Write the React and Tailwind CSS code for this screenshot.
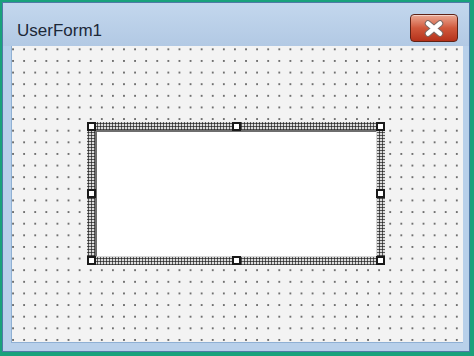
export default function App() {
  const handles = [
    "left-0 top-0",
    "left-[145px] top-0",
    "right-0 top-0",
    "left-0 top-[67px]",
    "right-0 top-[67px]",
    "left-0 bottom-0",
    "left-[145px] bottom-0",
    "right-0 bottom-0",
  ];

  return (
    <div className="w-[474px] h-[356px] bg-[#19a27b] pl-[2px] pt-[2px] pr-[4px] pb-[4px]">
      <div className="w-full h-full flex flex-col border border-[#4f7aa6] bg-[#b8d0ea] font-['Liberation_Sans',Arial,sans-serif]">
        {/* title bar */}
        <div className="h-[43px] shrink-0 flex justify-between items-start pl-[14px] pr-[11px] bg-gradient-to-b from-[#c3d7ed] to-[#b2c9e4]">
          <div className="pt-[18px] text-[17px] leading-[20px] text-[#1c2838]">UserForm1</div>
          <button className="mt-[11px] w-[48px] h-[28px] rounded-[4px] border border-[#5e2216] bg-gradient-to-b from-[#eaa893] via-[#d0583c] to-[#b5311a] flex items-center justify-center shadow-[inset_0_1px_0_rgba(255,255,255,0.5)]">
            <svg width="22" height="17" viewBox="0 0 22 17">
              <path d="M5 3.5 L17 13.5 M17 3.5 L5 13.5" stroke="#7a6a66" strokeWidth="6.5" strokeLinecap="round" />
              <path d="M5 3.5 L17 13.5 M17 3.5 L5 13.5" stroke="#ffffff" strokeWidth="4.5" strokeLinecap="round" />
            </svg>
          </button>
        </div>
        {/* body frame */}
        <div className="flex-1 flex pl-[8px] pr-[6px] pb-[8px]">
          <div className="flex-1 border-l border-b border-[#8fb0d4] bg-[#f3f3f3] bg-[radial-gradient(circle,#707070_0.8px,transparent_1.4px)] bg-[length:11.1px_11.63px] bg-[position:-4.5px_-2.5px] pl-[75px] pt-[76px]">
            <div className="relative w-[298px] h-[143px]">
              <div className="w-full h-full p-[8px] bg-[#dcdcdc] bg-[radial-gradient(circle,#2e2e2e_0.9px,transparent_1.3px)] bg-[length:3px_3px]">
                <div className="w-full h-full bg-white border-t-2 border-l-2 border-t-[#6e6e6e] border-l-[#6e6e6e] border-r border-b border-r-[#d6d6d6] border-b-[#d6d6d6]"></div>
              </div>
              {handles.map((h, i) => (
                <div key={i} className={`absolute ${h} w-[9px] h-[9px] bg-white border-2 border-[#1a1a1a]`}></div>
              ))}
            </div>
          </div>
        </div>
      </div>
    </div>
  );
}
